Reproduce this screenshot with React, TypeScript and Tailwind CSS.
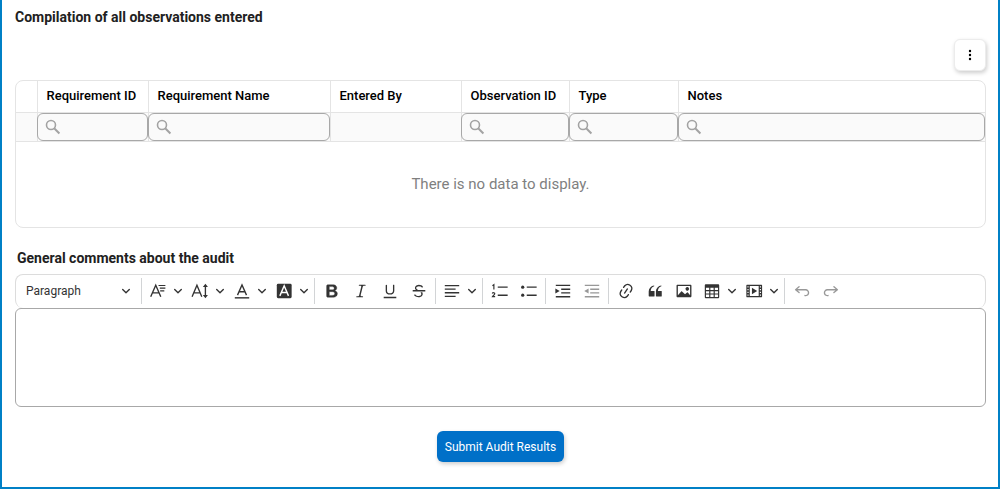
import { useState } from "react";
import type { ReactNode } from "react";

const COLUMNS = [
  { key: "requirementId", label: "Requirement ID", filter: true },
  { key: "requirementName", label: "Requirement Name", filter: true },
  { key: "enteredBy", label: "Entered By", filter: false },
  { key: "observationId", label: "Observation ID", filter: true },
  { key: "type", label: "Type", filter: true },
  { key: "notes", label: "Notes", filter: true },
];

function Chevron() {
  return (
    <svg className="w-[10px] h-[10px] shrink-0" viewBox="0 0 10 10" fill="none" stroke="currentColor" strokeWidth={1.4} strokeLinecap="round" strokeLinejoin="round">
      <path d="M1.7 3.6 5 6.7l3.3-3.1" />
    </svg>
  );
}

function Icon({ children }: { children: ReactNode }) {
  return (
    <svg className="w-[18px] h-[18px] shrink-0" viewBox="0 0 20 20" fill="currentColor">
      {children}
    </svg>
  );
}

function ToolButton({ label, disabled, children }: { label: string; disabled?: boolean; children: ReactNode }) {
  return (
    <button type="button" aria-label={label} title={label} disabled={disabled}
      className="w-[29px] h-7 rounded flex items-center justify-center hover:bg-gray-100 disabled:opacity-50">
      <Icon>{children}</Icon>
    </button>
  );
}

function ToolDropdown({ label, children }: { label: string; children: ReactNode }) {
  return (
    <button type="button" aria-label={label} title={label} aria-haspopup="true"
      className="w-[42px] h-7 rounded flex items-center gap-[6px] pl-[5px] hover:bg-gray-100">
      <Icon>{children}</Icon>
      <Chevron />
    </button>
  );
}

function Separator() {
  return <span className="w-px h-[26px] mx-[2px] bg-[#d2d4d6]" />;
}

function SearchIcon() {
  return (
    <svg className="absolute left-2 top-[6px] w-4 h-4 text-[#a3a3a3] pointer-events-none" viewBox="0 0 16 16" fill="none" stroke="currentColor" strokeWidth={1.6}>
      <circle cx="6" cy="6" r="4.5" />
      <path d="m9.2 9.300 5.200 5.200" strokeWidth={2} />
    </svg>
  );
}

function ObservationsGrid() {
  return (
    <div className="border border-[#e4e4e4] rounded-lg overflow-hidden">
      <table className="w-full table-fixed border-collapse">
        <colgroup>
          <col className="w-[21px]" />
          <col className="w-[111px]" />
          <col className="w-[182px]" />
          <col className="w-[131px]" />
          <col className="w-[108px]" />
          <col className="w-[109px]" />
          <col />
        </colgroup>
        <thead>
          <tr className="h-[31px]">
            <td />
            {COLUMNS.map((col) => (
              <th key={col.key} scope="col" className="border-l border-[#e4e4e4] p-0 pl-[9px] text-left text-[13px] leading-5 font-medium text-black whitespace-nowrap">
                {col.label}
              </th>
            ))}
          </tr>
          <tr className="h-7 bg-[#fafafa] border-b border-[#e4e4e4]">
            <td className="border-t border-[#e4e4e4]" />
            {COLUMNS.map((col) => (
              <td key={col.key} className="border-l border-t border-[#e4e4e4] p-0">
                {col.filter && (
                  <div className="relative -ml-px">
                    <SearchIcon />
                    <input type="text" aria-label={`Filter ${col.label}`}
                      className="block w-full h-7 rounded-md border border-[#a8a8a8] bg-transparent pl-7 pr-2 text-[13px] outline-none" />
                  </div>
                )}
              </td>
            ))}
          </tr>
        </thead>
        <tbody>
          <tr>
            <td colSpan={7} className="h-[86px] p-0 text-center text-[15px] leading-5 text-[#7f7f7f]">
              There is no data to display.
            </td>
          </tr>
        </tbody>
      </table>
    </div>
  );
}

function EditorToolbar() {
  return (
    <div role="toolbar" aria-label="Editor toolbar" className="flex flex-wrap items-center h-[34px] pb-px border border-b-0 border-[#dcdcdc] rounded-lg text-[#333]">
      <div className="relative w-[123px]">
        <select aria-label="Heading" defaultValue="p" className="appearance-none block w-full h-7 pl-[10px] bg-transparent text-[12px] outline-none">
          <option value="p">Paragraph</option>
          <option value="h1">Heading 1</option>
          <option value="h2">Heading 2</option>
        </select>
        <span className="absolute right-2 top-[9px] pointer-events-none"><Chevron /></span>
      </div>
      <Separator />

      <ToolDropdown label="Font Family">
        <path d="m1.9 16.5 5.6-13 5.6 13M4 12h7" fill="none" stroke="currentColor" strokeWidth="1.5" />
        <path d="M10.6 3.2h7.6v1.3h-7.6zM12 6.2h6.2v1.3H12zM12.4 9.2h4.6v1.3h-4.6z" />
      </ToolDropdown>
      <ToolDropdown label="Font Size">
        <path d="m1.2 16.5 5.4-13 5.4 13M3.2 12h6.8M16 4.5v11" fill="none" stroke="currentColor" strokeWidth="1.5" />
        <path d="m16 2 2.8 3.6h-5.6zM16 18l2.8-3.6h-5.6z" />
      </ToolDropdown>
      <ToolDropdown label="Font Color">
        <path d="m5 14.6 5-11.4 5 11.4M6.8 10.8h6.4" fill="none" stroke="currentColor" strokeWidth="1.5" />
        <path d="M2 16.8h16v1.6H2z" />
      </ToolDropdown>
      <ToolDropdown label="Font Background Color">
        <rect x="2" y="2" width="16.5" height="16" rx="1.5" />
        <path d="m5.4 15.4 4.8-11.2L15 15.4M7.2 11.6h6" fill="none" stroke="white" strokeWidth="1.6" />
      </ToolDropdown>
      <Separator />

      <ToolButton label="Bold">
        <path d="M10.187 17H5.773c-.637 0-1.092-.138-1.364-.415-.273-.277-.409-.718-.409-1.323V4.738c0-.617.14-1.062.419-1.332.279-.27.73-.406 1.354-.406h4.68c.69 0 1.288.041 1.793.124.506.083.96.242 1.36.478.341.197.644.447.906.75a3.262 3.262 0 0 1 .808 2.162c0 1.401-.722 2.426-2.167 3.075C15.05 10.175 16 11.315 16 13.01a3.756 3.756 0 0 1-2.296 3.504 6.1 6.1 0 0 1-1.517.377c-.571.073-1.238.11-2 .11zm-.217-6.217H7v4.087h3.069c1.977 0 2.965-.69 2.965-2.072 0-.707-.256-1.22-.768-1.537-.512-.319-1.277-.478-2.296-.478zM7 5.13v3.619h2.606c.729 0 1.292-.067 1.69-.2a1.6 1.6 0 0 0 .91-.765c.165-.267.247-.566.247-.897 0-.707-.26-1.176-.778-1.409-.519-.232-1.31-.348-2.375-.348H7z" stroke="currentColor" strokeWidth="0.4" />
      </ToolButton>
      <ToolButton label="Italic">
        <path d="m9.586 14.633.021.004c-.036.335.095.655.393.962.082.083.173.15.274.201h1.474a.6.6 0 1 1 0 1.2H5.304a.6.6 0 0 1 0-1.2h1.15c.474-.07.809-.182 1.005-.334.157-.122.291-.32.404-.597l2.416-9.55a1.053 1.053 0 0 0-.281-.823 1.12 1.12 0 0 0-.442-.296H8.15a.6.6 0 0 1 0-1.2h6.443a.6.6 0 1 1 0 1.2h-1.195c-.376.056-.65.155-.823.296-.215.175-.423.439-.623.79l-2.366 9.347z" />
      </ToolButton>
      <ToolButton label="Underline">
        <path d="M3 18v-1.5h14V18zm2.2-8V3.6c0-.4.4-.6.8-.6.3 0 .7.2.7.6v6.2c0 2 1.3 2.8 3.2 2.8 1.9 0 3.4-.9 3.4-2.9V3.6c0-.3.4-.5.8-.5.3 0 .7.2.7.5V10c0 2.7-2.2 4-4.9 4-2.6 0-4.7-1.2-4.7-4z" />
      </ToolButton>
      <ToolButton label="Strikethrough">
        <path d="M7 16.4c-.8-.4-1.5-.9-2.2-1.5a.6.6 0 0 1-.2-.5l.3-.6h1c1 1.2 2.1 1.7 3.7 1.7 1 0 1.8-.3 2.3-.6.6-.4.6-1.2.6-1.3.2-1.2-.9-2.1-.9-2.1h2.1c.3.7.4 1.2.4 1.7v.8l-.6 1.2c-.6.8-1.1 1-1.6 1.2a6 6 0 0 1-2.4.6c-1 0-1.8-.3-2.5-.6zM6.8 9 6 8.3c-.4-.5-.5-.8-.5-1.6 0-.7.1-1.3.5-1.8.4-.6 1-1 1.6-1.3a6.3 6.3 0 0 1 4.7 0 4 4 0 0 1 1.7 1l.3.7c0 .1.2.4-.2.7-.4.2-.9.1-1 0a3 3 0 0 0-1.2-1c-.4-.2-1-.3-2-.4-.7 0-1.4.2-2 .6-.8.6-1 .8-1 1.5 0 .8.5 1 1.2 1.5.6.4 1.1.7 1.9 1H6.8zM3 10.5V9h14v1.5z" />
      </ToolButton>
      <Separator />

      <ToolDropdown label="Text Alignment">
        <path d="M2 3.2h16v1.5H2zM2 7.2h12v1.5H2zM2 11.2h16v1.5H2zM2 15.2h12v1.5H2z" />
      </ToolDropdown>
      <Separator />

      <ToolButton label="Numbered List">
        <path d="M7.5 5h11v1.5h-11zM7.5 14h11v1.5h-11z" />
        <path d="M1.6 4.2 3.2 3v5.2M1.4 12.8c.5-1.3 3-1.2 2.7.3-.2 1-1.4 1.6-2.4 3.2h2.9" fill="none" stroke="currentColor" strokeWidth="1.3" />
      </ToolButton>
      <ToolButton label="Bulleted List">
        <path d="M7.5 5h11v1.5h-11zM7.5 14h11v1.5h-11z" />
        <circle cx="3" cy="5.7" r="1.8" />
        <circle cx="3" cy="14.7" r="1.8" />
      </ToolButton>
      <Separator />

      <ToolButton label="Increase Indent">
        <path d="M2 3h16v1.5H2zM8 7.3h10v1.5H8zM8 11.4h10v1.5H8zM2 15.6h16v1.5H2zM1.5 7.2v5.6L6.3 10z" />
      </ToolButton>
      <ToolButton label="Decrease Indent" disabled>
        <path d="M2 3h16v1.5H2zM8 7.3h10v1.5H8zM8 11.4h10v1.5H8zM2 15.6h16v1.5H2zM6.2 7.2v5.6L1.4 10z" />
      </ToolButton>
      <Separator />

      <ToolButton label="Link">
        <path d="m11.077 15 .991-1.416a.75.75 0 1 1 1.229.86l-1.148 1.64a.748.748 0 0 1-.217.206 5.251 5.251 0 0 1-8.503-5.955.741.741 0 0 1 .12-.274l1.147-1.639a.75.75 0 1 1 1.228.86L4.933 10.7l.006.003a3.75 3.75 0 0 0 6.132 4.294l.006.004zm5.494-5.335a.748.748 0 0 1-.12.274l-1.147 1.639a.75.75 0 1 1-1.228-.86l.86-1.23a3.75 3.75 0 0 0-6.144-4.301l-.86 1.229a.75.75 0 0 1-1.229-.86l1.148-1.64a.748.748 0 0 1 .217-.206 5.251 5.251 0 0 1 8.503 5.955zm-4.563-2.532a.75.75 0 0 1 .184 1.045l-3.155 4.505a.75.75 0 1 1-1.229-.86l3.155-4.506a.75.75 0 0 1 1.045-.184z" />
      </ToolButton>
      <ToolButton label="Block Quote">
        <path d="M3 10.423a6.5 6.5 0 0 1 6.056-6.408l.038.67C6.448 5.423 5.354 7.663 5.22 10H9c.552 0 .5.432.5.986v4.511c0 .554-.448.503-1 .503h-5c-.552 0-.5-.449-.5-1.003v-4.574zm8 0a6.5 6.5 0 0 1 6.056-6.408l.038.67c-2.646.739-3.74 2.979-3.873 5.315H17c.552 0 .5.432.5.986v4.511c0 .554-.448.503-1 .503h-5c-.552 0-.5-.449-.5-1.003v-4.574z" />
      </ToolButton>
      <ToolButton label="Insert Image">
        <path d="M6.91 10.54c.26-.23.64-.21.88.03l3.36 3.14 2.23-2.06a.64.64 0 0 1 .87 0l2.52 2.97V4.5H3.2v10.12l3.71-4.08zm10.27-7.51c.6 0 1.09.47 1.09 1.05v11.84c0 .59-.49 1.06-1.09 1.06H2.79c-.6 0-1.09-.47-1.09-1.06V4.08c0-.58.49-1.05 1.1-1.05h14.38zm-5.22 5.56a1.96 1.96 0 1 1 3.4-1.96 1.96 1.96 0 0 1-3.4 1.96z" />
      </ToolButton>
      <ToolDropdown label="Insert Table">
        <path fillRule="evenodd" d="M3 2.5h14a1 1 0 0 1 1 1V17a1 1 0 0 1-1 1H3a1 1 0 0 1-1-1V3.5a1 1 0 0 1 1-1zM3.3 6.3v2.700h3.600V6.300zm4.900 0v2.700h3.600V6.300zm4.900 0v2.700h3.600V6.300zM3.300 10.200v2.600h3.600v-2.600zm4.900 0v2.600h3.600v-2.600zm4.900 0v2.600h3.600v-2.600zM3.300 14v2.700h3.600V14zm4.900 0v2.700h3.600V14zm4.900 0v2.700h3.600V14z" />
      </ToolDropdown>
      <ToolDropdown label="Insert Media">
        <path fillRule="evenodd" d="M2 3h16.500a.5.5 0 0 1 .5.5v13a.5.5 0 0 1-.5.5H2a.5.5 0 0 1-.5-.5v-13A.5.5 0 0 1 2 3zM5.300 4.500v11h9.900v-11zM2.700 4.700v1.400h1.300V4.700zm0 3.100v1.400h1.300V7.800zm0 3.100v1.400h1.300v-1.400zm0 3.100v1.400h1.300V14zM16.500 4.700v1.400h1.300V4.700zm0 3.100v1.400h1.300V7.800zm0 3.100v1.400h1.300v-1.400zm0 3.100v1.400h1.300V14z" />
        <path d="M7.700 6.300v7.400l5.800-3.700z" />
      </ToolDropdown>
      <Separator />

      <ToolButton label="Undo" disabled>
        <path d="m5.042 9.367 2.189 1.837a.75.75 0 0 1-.965 1.149l-3.788-3.18a.747.747 0 0 1-.21-.284.75.75 0 0 1 .17-.945L6.23 4.762a.75.75 0 1 1 .964 1.15L4.863 7.866h8.917A.75.75 0 0 1 14 7.9a4 4 0 1 1-1.477 7.718l.344-1.489a2.5 2.5 0 1 0 1.094-4.73l.008-.032H5.042z" />
      </ToolButton>
      <ToolButton label="Redo" disabled>
        <path d="m14.958 9.367-2.189 1.837a.75.75 0 0 0 .965 1.149l3.788-3.18a.747.747 0 0 0 .21-.284.75.75 0 0 0-.17-.945L13.77 4.762a.75.75 0 1 0-.964 1.15l2.331 1.955H6.22A.75.75 0 0 0 6 7.9a4 4 0 1 0 1.477 7.718l-.344-1.489A2.5 2.5 0 1 1 6.039 9.4l-.008-.032h8.927z" />
      </ToolButton>
    </div>
  );
}

export default function App() {
  const [comments, setComments] = useState("");

  return (
    <main className="border-2 border-t-0 border-[#0080c6] bg-white pl-[13px] pr-3 pt-[7px] pb-[25px] font-[Roboto,sans-serif]">
      <h2 className="text-[14px] leading-5 font-bold text-[#212121]">Compilation of all observations entered</h2>

      <div className="flex justify-end mt-3 mb-[9px]">
        <button type="button" aria-label="More actions"
          className="w-8 h-8 rounded-md border border-[#ececec] bg-white flex items-center justify-center shadow-[1px_2px_4px_rgba(0,0,0,0.2)]">
          <svg className="w-4 h-4" viewBox="0 0 16 16" fill="black">
            <circle cx="8" cy="4" r="1.2" />
            <circle cx="8" cy="8" r="1.2" />
            <circle cx="8" cy="12" r="1.2" />
          </svg>
        </button>
      </div>

      <ObservationsGrid />

      <label htmlFor="comments" className="block mt-5 mb-[6px] pl-[2px] text-[14px] leading-5 font-bold text-[#212121]">
        General comments about the audit
      </label>
      <EditorToolbar />
      <textarea id="comments" value={comments} onChange={(e) => setComments(e.target.value)}
        className="block w-full h-[99px] resize-none rounded-md border border-[#a8a8a8] p-2 text-[13px] outline-none" />

      <div className="flex justify-center mt-6">
        <button type="submit" className="h-[31px] px-2 rounded-md bg-[#0070c8] text-white text-[12px] shadow-[1px_2px_4px_rgba(0,0,0,0.2)]">
          Submit Audit Results
        </button>
      </div>
    </main>
  );
}
